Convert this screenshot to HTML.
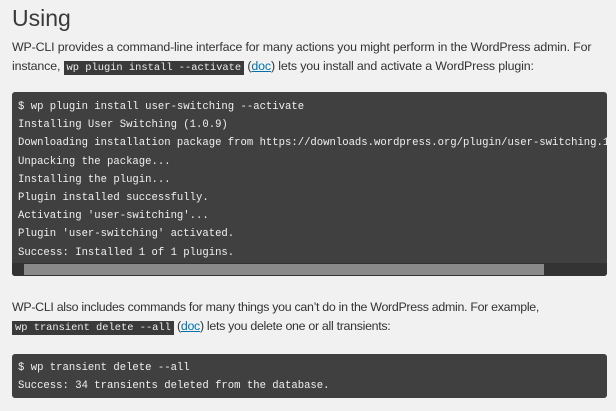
<!DOCTYPE html>
<html><head><style>
body{margin:0;background:#f1f1f1;width:616px;height:411px;overflow:hidden;font-family:"Liberation Sans",sans-serif;color:#333;}
h1{position:absolute;left:12px;top:5px;margin:0;font-weight:normal;font-size:23px;color:#3a3a3a;}
.p{position:absolute;left:12px;font-size:12.4px;line-height:19px;white-space:nowrap;letter-spacing:-0.15px;}
code{font-family:"Liberation Mono",monospace;font-size:10.4px;background:#3a3a3a;color:#eee;padding:1px 3px;letter-spacing:0}
a{color:#0073aa;text-decoration:underline}
.pre{position:absolute;left:12px;width:595px;background:#404040;border-radius:3px;overflow:hidden;font-family:"Liberation Mono",monospace;font-size:10.6px;color:#f0f0f0;line-height:18.2px;white-space:pre;}
.pre div.t{padding-left:6px}
</style></head><body>
<h1>Using</h1>
<div class="p" style="top:38px">WP-CLI provides a command-line interface for many actions you might perform in the WordPress admin. For<br>instance, <code>wp plugin install --activate</code> (<a>doc</a>) lets you install and activate a WordPress plugin:</div>
<div class="pre" style="top:92px;height:184px"><div class="t" style="padding-top:6px">$ wp plugin install user-switching --activate
Installing User Switching (1.0.9)
Downloading installation package from https://downloads.wordpress.org/plugin/user-switching.1.0.9.zip...
Unpacking the package...
Installing the plugin...
Plugin installed successfully.
Activating 'user-switching'...
Plugin 'user-switching' activated.
Success: Installed 1 of 1 plugins.</div>
<div style="position:absolute;left:0;top:171px;width:595px;height:13px;background:#333"></div>
<div style="position:absolute;left:12px;top:172px;width:520px;height:11px;background:#8a8a8a"></div>
</div>
<div class="p" style="top:298px;letter-spacing:-0.3px">WP-CLI also includes commands for many things you can’t do in the WordPress admin. For example,<br><code>wp transient delete --all</code> (<a>doc</a>) lets you delete one or all transients:</div>
<div class="pre" style="top:354px;height:44px"><div class="t" style="padding-top:5px">$ wp transient delete --all
Success: 34 transients deleted from the database.</div></div>
</body></html>
